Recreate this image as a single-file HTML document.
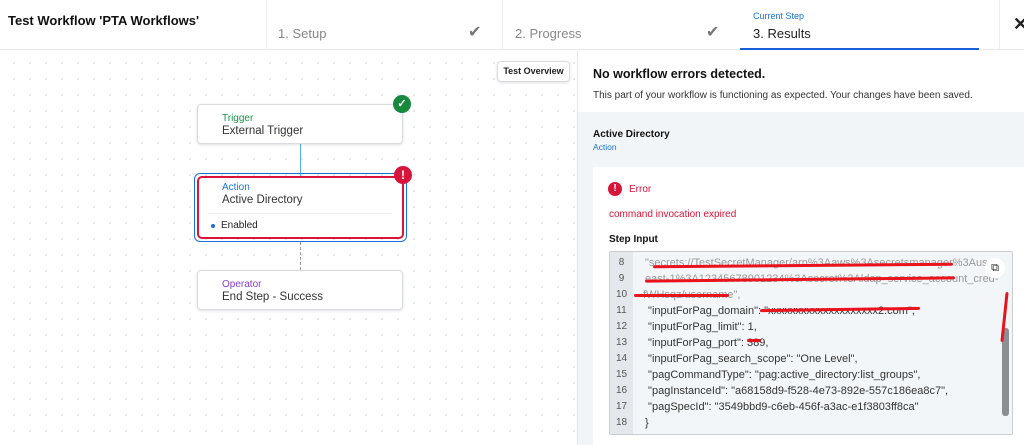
<!DOCTYPE html>
<html><head><meta charset="utf-8"><style>
*{box-sizing:border-box;margin:0;padding:0}
body{width:1024px;height:445px;overflow:hidden;font-family:"Liberation Sans",sans-serif;background:#fff;position:relative;color:#222}
.abs{position:absolute}
.hdr{left:0;top:0;width:1024px;height:50px;border-bottom:1px solid #e6e8eb;background:#fff}
.canvas{left:0;top:51px;width:577px;height:394px;background-color:#fff;background-image:radial-gradient(#dde0e4 0.8px,transparent 1.1px);background-size:16px 16px;background-position:6px 4px}
.node{background:#fff;border:1px solid #d8dce1;border-radius:4px;box-shadow:0 1px 3px rgba(0,0,0,.12)}
.lbl{font-size:10px}
.ttl{font-size:11.5px;color:#333}
.code div{height:16px;line-height:16px;font-size:11px;color:#333;white-space:nowrap}
.gut div{height:16px;line-height:16px;font-size:10px;color:#555;text-align:center}
.red{position:absolute;height:3px;background:#e8131b;border-radius:2px}
</style></head><body>
<div class="abs hdr"></div>
<div class="abs" style="left:8px;top:13px;font-size:13px;font-weight:bold;color:#111">Test Workflow 'PTA Workflows'</div>
<div class="abs" style="left:266px;top:0;width:1px;height:50px;background:#eceef0"></div>
<div class="abs" style="left:502px;top:0;width:1px;height:50px;background:#eceef0"></div>
<div class="abs" style="left:999px;top:0;width:1px;height:50px;background:#eceef0"></div>
<div class="abs" style="left:278px;top:26px;font-size:13px;color:#888">1. Setup</div>
<div class="abs" style="left:468px;top:22px;font-size:16px;color:#777">✔</div>
<div class="abs" style="left:515px;top:26px;font-size:13px;color:#888">2. Progress</div>
<div class="abs" style="left:706px;top:22px;font-size:16px;color:#777">✔</div>
<div class="abs" style="left:753px;top:11px;font-size:9px;color:#1a73d9">Current Step</div>
<div class="abs" style="left:753px;top:26px;font-size:13px;color:#222">3. Results</div>
<div class="abs" style="left:740px;top:48px;width:239px;height:2px;background:#1a5fd9"></div>
<div class="abs" style="left:1013px;top:14px;font-size:18px;font-weight:bold;color:#222">✕</div>

<div class="abs canvas"></div>
<div class="abs node" style="left:497px;top:61px;width:73px;height:21px;font-size:9px;font-weight:bold;text-align:center;line-height:19px;color:#222">Test Overview</div>

<div class="abs" style="left:300px;top:144px;width:1px;height:32px;background:#4fb3e8"></div>
<div class="abs" style="left:300px;top:242px;width:0;height:28px;border-left:1px dashed #999"></div>
<div class="abs node" style="left:197px;top:104px;width:206px;height:40px"></div>
<div class="abs lbl" style="left:222px;top:113px;color:#1a9448">Trigger</div>
<div class="abs ttl" style="left:222px;top:125px">External Trigger</div>
<div class="abs" style="left:393px;top:95px;width:18px;height:18px;border-radius:50%;background:#178a3e;color:#fff;font-size:11px;text-align:center;line-height:18px;font-weight:bold">✓</div>

<div class="abs" style="left:194px;top:173px;width:213px;height:69px;border:1.5px solid #1a6fd9;border-radius:6px"></div>
<div class="abs" style="left:197px;top:176px;width:207px;height:63px;border:2px solid #d8143a;border-radius:5px;background:#fff"></div>
<div class="abs lbl" style="left:222px;top:182px;color:#1a73d9">Action</div>
<div class="abs ttl" style="left:222px;top:194px">Active Directory</div>
<div class="abs" style="left:208px;top:213px;width:184px;height:1px;background:#eee"></div>
<div class="abs" style="left:211px;top:224px;width:4px;height:4px;border-radius:50%;background:#1a6fd9"></div>
<div class="abs" style="left:221px;top:220px;font-size:10px;color:#222">Enabled</div>
<div class="abs" style="left:394px;top:166px;width:18px;height:18px;border-radius:50%;background:#d8143a;color:#fff;font-size:12px;text-align:center;line-height:18px;font-weight:bold">!</div>

<div class="abs node" style="left:197px;top:270px;width:206px;height:40px"></div>
<div class="abs lbl" style="left:222px;top:279px;color:#8a3fd1">Operator</div>
<div class="abs ttl" style="left:222px;top:291px">End Step - Success</div>

<div class="abs" style="left:577px;top:51px;width:1px;height:394px;background:#e3e6ea"></div>
<div class="abs" style="left:593px;top:67px;font-size:12.5px;font-weight:bold;color:#111">No workflow errors detected.</div>
<div class="abs" style="left:593px;top:90px;font-size:10px;color:#333">This part of your workflow is functioning as expected. Your changes have been saved.</div>
<div class="abs" style="left:578px;top:112px;width:446px;height:333px;background:#f2f5f8"></div>
<div class="abs" style="left:593px;top:129px;font-size:10px;font-weight:bold;color:#111">Active Directory</div>
<div class="abs" style="left:593px;top:142px;font-size:8.5px;color:#1a73d9">Action</div>
<div class="abs" style="left:593px;top:167px;width:431px;height:278px;background:#fff"></div>
<div class="abs" style="left:608px;top:182px;width:14px;height:14px;border-radius:50%;background:#d8143a;color:#fff;font-size:10px;font-weight:bold;text-align:center;line-height:14px">!</div>
<div class="abs" style="left:629px;top:184px;font-size:10px;color:#d8143a">Error</div>
<div class="abs" style="left:609px;top:209px;font-size:10px;color:#d8143a">command invocation expired</div>
<div class="abs" style="left:609px;top:234px;font-size:10px;font-weight:bold;color:#111">Step Input</div>

<div class="abs" style="left:609px;top:251px;width:404px;height:184px;border:1px solid #c8cdd2;border-radius:2px;background:#f3f6f9"></div>
<div class="abs" style="left:610px;top:252px;width:23px;height:182px;background:#e4e8ec"></div>
<div class="abs gut" style="left:610px;top:255px;width:23px"><div>8</div><div>9</div><div>10</div><div>11</div><div>12</div><div>13</div><div>14</div><div>15</div><div>16</div><div>17</div><div>18</div></div>
<div class="abs code" style="left:645px;top:255px">
<div style="color:#999">"secrets://TestSecretManager/arn%3Aaws%3Asecretsmanager%3Aus-</div>
<div style="color:#999">east-1%3A12345678901234%3Asecret%3Aldap_service_account_cred-</div>
<div style="color:#999;margin-left:-2px">fWHsqz/username",</div>
<div>&nbsp;"inputForPag_domain": "xxxxxxxxxxxxxxxxxxxx2.com",</div>
<div>&nbsp;"inputForPag_limit": 1,</div>
<div>&nbsp;"inputForPag_port": 389,</div>
<div>&nbsp;"inputForPag_search_scope": "One Level",</div>
<div>&nbsp;"pagCommandType": "pag:active_directory:list_groups",</div>
<div>&nbsp;"pagInstanceId": "a68158d9-f528-4e73-892e-557c186ea8c7",</div>
<div>&nbsp;"pagSpecId": "3549bbd9-c6eb-456f-a3ac-e1f3803ff8ca"</div>
<div>}</div>
</div>
<div class="red" style="left:653px;top:264px;width:300px;transform:rotate(-.5deg)"></div>
<div class="red" style="left:645px;top:278px;width:310px;transform:rotate(-.6deg)"></div>
<div class="red" style="left:634px;top:294px;width:95px"></div>
<div class="red" style="left:760px;top:308px;width:160px;transform:rotate(-.8deg)"></div>
<div class="red" style="left:747px;top:339px;width:14px"></div>
<div class="abs" style="left:985px;top:258px;width:20px;height:20px;border-radius:50%;background:#fff;font-size:11px;text-align:center;line-height:20px;color:#222">⧉</div>
<div class="abs" style="left:1002px;top:328px;width:7px;height:88px;border-radius:3px;background:#8b8f94"></div>
<div class="abs" style="left:1003px;top:292px;width:3px;height:50px;background:#e8131b;border-radius:2px;transform:rotate(6deg)"></div>
</body></html>
